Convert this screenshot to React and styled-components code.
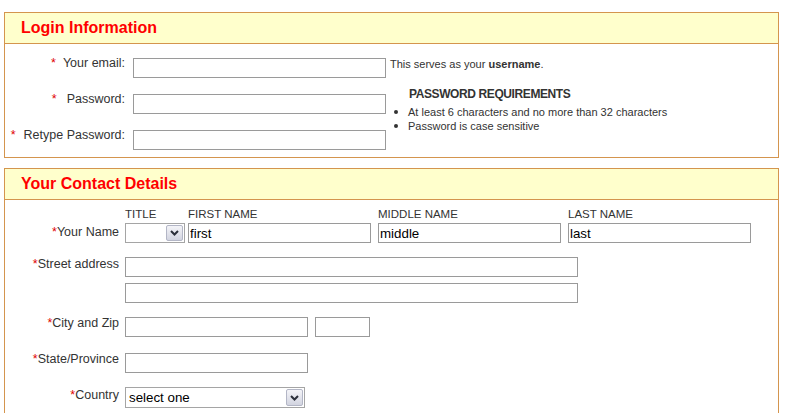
import styled, { createGlobalStyle } from "styled-components";

const GlobalStyle = createGlobalStyle`
  html, body {
    margin: 0;
    padding: 0;
    background: #fff;
  }
  body {
    font-family: "Liberation Sans", Arial, sans-serif;
    color: #333;
  }
`;

function Chevron() {
  return (
    <svg width="9" height="6" viewBox="0 0 9 6">
      <polyline points="1,1 4.5,4.5 8,1" fill="none" stroke="#2b2f3a" strokeWidth="2" />
    </svg>
  );
}

function FakeSelect({ value, width, height = 20 }) {
  return (
    <SelectBox $width={width} $height={height}>
      <SelectValue>{value}</SelectValue>
      <SelectButton $height={height - 4}>
        <Chevron />
      </SelectButton>
    </SelectBox>
  );
}

export default function App() {
  return (
    <Page>
      <GlobalStyle />

      <Section>
        <SectionHeader>Login Information</SectionHeader>
        <LoginBody>
          <LoginGrid>
            <LoginLabel>
              <Req $space={7}>*</Req>Your email:
            </LoginLabel>
            <TextInput $width={253} readOnly />
            <LoginLabel>
              <Req $space={10}>*</Req>Password:
            </LoginLabel>
            <TextInput $width={253} type="password" readOnly />
            <LoginLabel>
              <Req $space={8}>*</Req>Retype Password:
            </LoginLabel>
            <TextInput $width={253} type="password" readOnly />
          </LoginGrid>

          <Notes>
            <NoteLine>
              This serves as your <b>username</b>.
            </NoteLine>
            <NoteHeading>PASSWORD REQUIREMENTS</NoteHeading>
            <RuleList>
              <Rule>At least 6 characters and no more than 32 characters</Rule>
              <Rule>Password is case sensitive</Rule>
            </RuleList>
          </Notes>
        </LoginBody>
      </Section>

      <Section $gapTop={10}>
        <SectionHeader>Your Contact Details</SectionHeader>
        <ContactGrid>
          <FieldLabel $top={19}>
            <Req>*</Req>Your Name
          </FieldLabel>
          <NameRow>
            <NameField>
              <ColumnHead>TITLE</ColumnHead>
              <FakeSelect value="" width={60} />
            </NameField>
            <NameField>
              <ColumnHead>FIRST NAME</ColumnHead>
              <TextInput $width={183} defaultValue="first" />
            </NameField>
            <NameField>
              <ColumnHead>MIDDLE NAME</ColumnHead>
              <TextInput $width={183} defaultValue="middle" />
            </NameField>
            <NameField>
              <ColumnHead>LAST NAME</ColumnHead>
              <TextInput $width={183} defaultValue="last" />
            </NameField>
          </NameRow>

          <FieldLabel $top={1}>
            <Req>*</Req>Street address
          </FieldLabel>
          <Stack>
            <TextInput $width={453} readOnly />
            <TextInput $width={453} readOnly />
          </Stack>

          <FieldLabel>
            <Req>*</Req>City and Zip
          </FieldLabel>
          <InlineRow $after={2}>
            <TextInput $width={183} readOnly />
            <TextInput $width={55} readOnly />
          </InlineRow>

          <FieldLabel>
            <Req>*</Req>State/Province
          </FieldLabel>
          <InlineRow>
            <TextInput $width={183} readOnly />
          </InlineRow>

          <FieldLabel $top={2}>
            <Req>*</Req>Country
          </FieldLabel>
          <InlineRow>
            <FakeSelect value="select one" width={180} height={21} />
          </InlineRow>
        </ContactGrid>
      </Section>
    </Page>
  );
}

const Page = styled.div`
  padding: 12px 0 0 4px;
  width: 782px;
  box-sizing: border-box;
`;

const Section = styled.div`
  width: 775px;
  box-sizing: border-box;
  border: 1px solid #d4954e;
  margin-top: ${(p) => p.$gapTop || 0}px;
`;

const SectionHeader = styled.div`
  height: 30px;
  line-height: 30px;
  background: #ffffcc;
  border-bottom: 1px solid #d4954e;
  padding-left: 16px;
  color: #ff0000;
  font-size: 16px;
  font-weight: bold;
`;

const LoginBody = styled.div`
  display: flex;
  align-items: flex-start;
`;

const LoginGrid = styled.div`
  display: grid;
  grid-template-columns: 120px 253px;
  column-gap: 8px;
  row-gap: 16px;
  align-items: start;
  padding: 14px 0 7px 0;
`;

const LoginLabel = styled.div`
  text-align: right;
  font-size: 12.5px;
  line-height: 14px;
  white-space: nowrap;
  margin-top: -2px;
`;

const Req = styled.span`
  color: #e00000;
  margin-right: ${(p) => p.$space || 0}px;
`;

const TextInput = styled.input`
  width: ${(p) => p.$width}px;
  height: 20px;
  box-sizing: border-box;
  margin: 0;
  border: 1px solid #9a9a9a;
  padding: 0 1px;
  font-family: "Liberation Sans", Arial, sans-serif;
  font-size: 13.33px;
  color: #000;
  background: #fff;
  outline: none;
`;

const Notes = styled.div`
  margin-left: 4px;
  padding-top: 13px;
  font-size: 11px;
  color: #333;
`;

const NoteLine = styled.div`
  line-height: 14px;
  b {
    font-weight: bold;
  }
`;

const NoteHeading = styled.div`
  margin: 16px 0 4px 19px;
  font-size: 12px;
  line-height: 14px;
  font-weight: bold;
  letter-spacing: -0.4px;
`;

const RuleList = styled.ul`
  list-style: none;
  margin: 0;
  padding: 0 0 0 18px;
`;

const Rule = styled.li`
  position: relative;
  line-height: 14px;
  &::before {
    content: "";
    position: absolute;
    left: -14px;
    top: 5px;
    width: 4px;
    height: 4px;
    border-radius: 50%;
    background: #333;
  }
`;

const ContactGrid = styled.div`
  display: grid;
  grid-template-columns: 114px auto;
  column-gap: 6px;
  row-gap: 14px;
  align-items: start;
  justify-content: start;
  padding: 7px 0 20px 0;
`;

const FieldLabel = styled.div`
  text-align: right;
  font-size: 12.5px;
  line-height: 14px;
  white-space: nowrap;
  padding-top: ${(p) => p.$top || 0}px;
  margin-top: -1px;
`;

const NameRow = styled.div`
  display: grid;
  grid-template-columns: 63px 190px 190px 183px;
`;

const NameField = styled.div`
  display: flex;
  flex-direction: column;
`;

const ColumnHead = styled.div`
  font-size: 11.5px;
  line-height: 15px;
  height: 16px;
  color: #333;
`;

const Stack = styled.div`
  display: flex;
  flex-direction: column;
  gap: 6px;
`;

const InlineRow = styled.div`
  display: flex;
  gap: 7px;
  padding-bottom: ${(p) => p.$after || 0}px;
`;

const SelectBox = styled.div`
  width: ${(p) => p.$width}px;
  height: ${(p) => p.$height}px;
  box-sizing: border-box;
  border: 1px solid #a5a5a5;
  background: #fff;
  display: flex;
  align-items: center;
  justify-content: space-between;
  padding: 0 1px 0 3px;
`;

const SelectValue = styled.span`
  font-size: 13.33px;
  color: #000;
  line-height: 18px;
  padding-top: 1px;
`;

const SelectButton = styled.div`
  width: 17px;
  height: ${(p) => p.$height}px;
  box-sizing: border-box;
  border: 1px solid #b3b6c6;
  border-radius: 2px;
  background: linear-gradient(#f4f4f8, #d2d4e0);
  display: flex;
  align-items: center;
  justify-content: center;
`;
